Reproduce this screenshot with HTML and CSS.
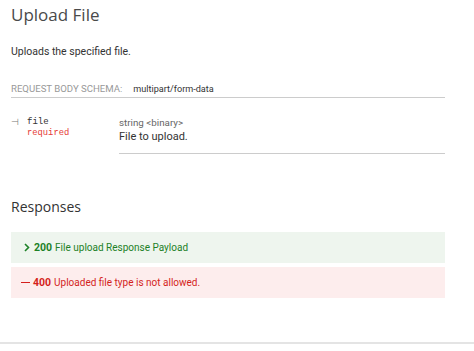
FILE: index.html
```html
<!DOCTYPE html>
<html>
<head>
<meta charset="utf-8">
<link rel="stylesheet" href="styles.css">
</head>
<body>
<div class="page">
  <main class="op">
    <h2 class="title">Upload File</h2>
    <p class="desc">Uploads the specified file.</p>
    <div class="schema-head">
      <span class="schema-label">REQUEST BODY SCHEMA:</span>
      <span class="schema-type">multipart/form-data</span>
    </div>
    <div class="param">
      <div class="param-name">
        <span class="branch">⊣</span>
        <div class="name-col">
          <span class="pname">file</span>
          <span class="req">required</span>
        </div>
      </div>
      <div class="param-info">
        <div class="ptype">string &lt;binary&gt;</div>
        <div class="pdesc">File to upload.</div>
      </div>
    </div>
    <h3 class="resp-title">Responses</h3>
    <div class="resp ok">
      <svg class="chev" width="6" height="9" viewBox="0 0 6 9"><path d="M1 1l3.5 3.5L1 8" fill="none" stroke="#1d8127" stroke-width="1.6"/></svg>
      <strong class="code">200</strong>
      <span class="rtext">File upload Response Payload</span>
    </div>
    <div class="resp err">
      <span class="dash"></span>
      <strong class="code">400</strong>
      <span class="rtext">Uploaded file type is not allowed.</span>
    </div>
  </main>
  <div class="footer-line"></div>
</div>
</body>
</html>
```

FILE: styles.css
```css
html, body {
  margin: 0;
  padding: 0;
  background: #fff;
}
.page {
  width: 474px;
  height: 351px;
  display: flex;
  flex-direction: column;
}
.op {
  padding: 0 29px 0 11px;
  height: 342px;
  box-sizing: border-box;
  font-family: Roboto, sans-serif;
}
.title {
  font-family: "Open Sans", sans-serif;
  font-weight: 400;
  font-size: 17px;
  color: #4a4a4a;
  margin: 0;
  padding-top: 1px;
  line-height: 28px;
}
.desc {
  margin: 16px 0 0;
  font-size: 10.5px;
  line-height: 14px;
  color: #333;
}
.schema-head {
  margin-top: 24px;
  display: flex;
  align-items: baseline;
  gap: 11px;
  padding-bottom: 3px;
  border-bottom: 1px solid #ccc;
}
.schema-label {
  font-size: 9.6px;
  color: #999;
}
.schema-type {
  font-size: 9.1px;
  color: #333;
}
.param {
  display: flex;
  margin-top: 19px;
}
.param-name {
  width: 108px;
  display: flex;
  gap: 9px;
}
.branch {
  font-size: 9px;
  color: #777;
  line-height: 11px;
}
.name-col {
  display: flex;
  flex-direction: column;
  font-family: "Liberation Mono", monospace;
  font-size: 9px;
  line-height: 11px;
  margin-left: -1px;
}
.pname { color: #333; }
.req { color: #e53935; font-size: 8.8px; }
.param-info {
  flex: 1;
  border-bottom: 1px solid #ccc;
  padding-bottom: 9px;
}
.ptype {
  font-size: 9.8px;
  color: #666;
  line-height: 12px;
}
.pdesc {
  font-size: 11px;
  color: #333;
  line-height: 15px;
  margin-top: 0;
}
.resp-title {
  font-family: "Open Sans", sans-serif;
  font-weight: 400;
  font-size: 14px;
  color: #333;
  margin: 44px 0 0;
  line-height: 18px;
}
.resp {
  height: 31px;
  display: flex;
  align-items: center;
  font-size: 10px;
  padding-left: 13px;
  box-sizing: border-box;
}
.resp.ok {
  margin-top: 16px;
  background: #eef5ee;
  color: #1d8127;
}
.resp.err {
  margin-top: 4px;
  background: #fdeded;
  color: #d41f1c;
  padding-left: 10px;
}
.chev { margin-right: 4px; }
.dash {
  width: 9px;
  height: 1.5px;
  background: #d41f1c;
  margin-right: 3px;
}
.code { font-weight: 700; margin-right: 3px; font-size: 10.5px; }
.footer-line {
  height: 2px;
  background: #e4e4e4;
}
```
